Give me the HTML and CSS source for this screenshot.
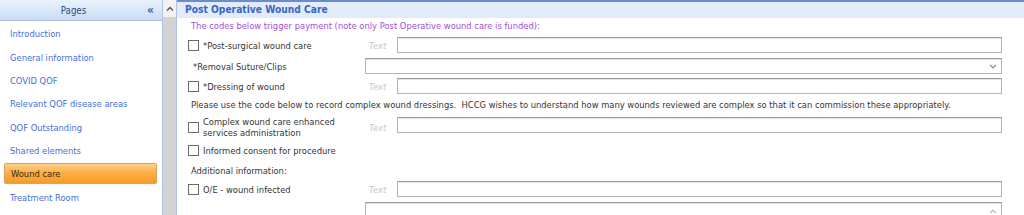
FILE: index.html
```html
<!DOCTYPE html>
<html lang="en">
<head>
  <meta charset="UTF-8" />
  <title>Post Operative Wound Care</title>
  <link rel="stylesheet" href="styles.css">
</head>
<body>
  <div class="app">
    <div class="sidebar">
      <div class="side-head">
        <span class="side-title">Pages</span>
        <span class="collapse">&laquo;</span>
      </div>
      <ul class="nav">
        <li>Introduction</li>
        <li>General information</li>
        <li>COVID QOF</li>
        <li>Relevant QOF disease areas</li>
        <li>QOF Outstanding</li>
        <li>Shared elements</li>
        <li class="active"><span>Wound care</span></li>
        <li>Treatment Room</li>
      </ul>
    </div>

    <div class="scroller">
      <div class="scroll-btn">
        <svg width="8" height="5" viewBox="0 0 8 5"><path d="M1 4.5 L4 1.5 L7 4.5" fill="none" stroke="#505050" stroke-width="1.3"/></svg>
      </div>
    </div>

    <div class="content">
      <div class="page-head">Post Operative Wound Care</div>

      <p class="note">The codes below trigger payment (note only Post Operative wound care is funded):</p>

      <div class="row r1">
        <label class="chk"><span class="box"></span>*Post-surgical wound care</label>
        <span class="hint">Text</span>
        <div class="field"></div>
      </div>

      <div class="row r2">
        <span class="plain">*Removal Suture/Clips</span>
        <div class="field select">
          <svg width="8" height="5" viewBox="0 0 8 5"><path d="M1 0.8 L4 3.8 L7 0.8" fill="none" stroke="#777" stroke-width="1.1"/></svg>
        </div>
      </div>

      <div class="row r3">
        <label class="chk"><span class="box"></span>*Dressing of wound</label>
        <span class="hint">Text</span>
        <div class="field"></div>
      </div>

      <p class="para">Please use the code below to record complex wound dressings.&nbsp; HCCG wishes to understand how many wounds reviewed are complex so that it can commission these appropriately.</p>

      <div class="row r4">
        <label class="chk"><span class="box"></span><span class="two">Complex wound care enhanced<br>services administration</span></label>
        <span class="hint">Text</span>
        <div class="field"></div>
      </div>

      <div class="row r5">
        <label class="chk"><span class="box"></span>Informed consent for procedure</label>
      </div>

      <p class="para extra">Additional information:</p>

      <div class="row r6">
        <label class="chk"><span class="box"></span>O/E - wound infected</label>
        <span class="hint">Text</span>
        <div class="field"></div>
      </div>

      <div class="row r7">
        <div class="field area">
          <svg width="8" height="5" viewBox="0 0 8 5"><path d="M1 4.2 L4 1.2 L7 4.2" fill="none" stroke="#aaa" stroke-width="1.1"/></svg>
        </div>
      </div>
    </div>
  </div>
</body>
</html>
```

FILE: styles.css
```css
* { box-sizing: border-box; }
body { margin: 0; background: #fff; font-family: "DejaVu Sans Condensed", "Liberation Sans", sans-serif; font-size: 9.3px; color: #333; overflow: hidden; }
.app { display: flex; height: 215px; overflow: hidden; }

/* left pages panel */
.sidebar { width: 163px; border-right: 1px solid #a9c3ea; flex-shrink: 0; }
.side-head { height: 21px; display: flex; align-items: center; padding: 0 8px 0 0; background: linear-gradient(#eaf2fc, #c9dcf5); border-bottom: 1px solid #a3bfe6; color: #2d4e8c; font-size: 9.6px; }
.side-title { flex: 1; text-align: center; }
.collapse { color: #3a68c0; font-weight: bold; font-size: 12px; }
.nav { list-style: none; margin: 0; padding: 1px 0 0; }
.nav li { height: 23.35px; display: flex; align-items: center; padding-left: 10px; color: #3f6fd6; }
.nav li.active { padding: 1px 5px 1px 4px; }
.nav li.active span { flex: 1; height: 100%; display: flex; align-items: center; padding-left: 6px; color: #3b2a12; background: linear-gradient(#ffd28a, #fbb047 45%, #f79a28); border: 1px solid #d9a55a; border-radius: 2px; box-shadow: 0 0 1px #c9c9c9; }

/* scrollbar strip */
.scroller { width: 14px; flex-shrink: 0; background: #d3d3d3; border-right: 1px solid #a9c3ea; }
.scroll-btn { height: 17px; background: #f2f2f2; display: flex; align-items: center; justify-content: center; }

/* main form */
.content { flex: 1; padding-right: 22px; }
.page-head { border-top: 2px solid #6a8ccc; background: #e3ebf8; height: 18px; padding-left: 8px; color: #3567c6; font-weight: bold; font-size: 10.2px; line-height: 16px; margin-right: -22px; }
.note, .para { margin: 0; padding-left: 14px; line-height: 14px; }
.note { color: #a24fce; margin-top: 1px; }
.para { margin-top: 4px; }
.para.extra { margin-top: 7px; }

.row { display: grid; grid-template-columns: 177px 32px 1fr; align-items: center; padding-left: 11px; }
.r1 { margin-top: 4px; }
.r2 { margin-top: 5px; }
.r3 { margin-top: 4px; }
.r4 { margin-top: 4px; }
.r5 { margin-top: 5px; height: 14px; }
.r6 { margin-top: 3px; }
.r7 { margin-top: 5px; }

.chk { display: flex; align-items: center; }
.box { width: 11px; height: 11px; border: 1px solid #6b6b6b; background: #fff; margin-right: 4px; flex-shrink: 0; }
.two { line-height: 11px; }
.plain { padding-left: 5px; }
.hint { color: #c9c9c9; font-style: italic; padding-left: 4px; }

.field { height: 16px; border: 1px solid #b4b4b4; border-top-color: #9a9a9a; background: #fff; box-shadow: inset 0 1px 0 #e6e6e6; }
.r4 .field { align-self: start; margin-top: 1px; }
.select { grid-column: 2 / 4; display: flex; align-items: center; justify-content: flex-end; padding-right: 4px; }
.area { grid-column: 2 / 4; height: 30px; display: flex; justify-content: flex-end; align-items: flex-start; padding: 6px 4px 0 0; }
```
